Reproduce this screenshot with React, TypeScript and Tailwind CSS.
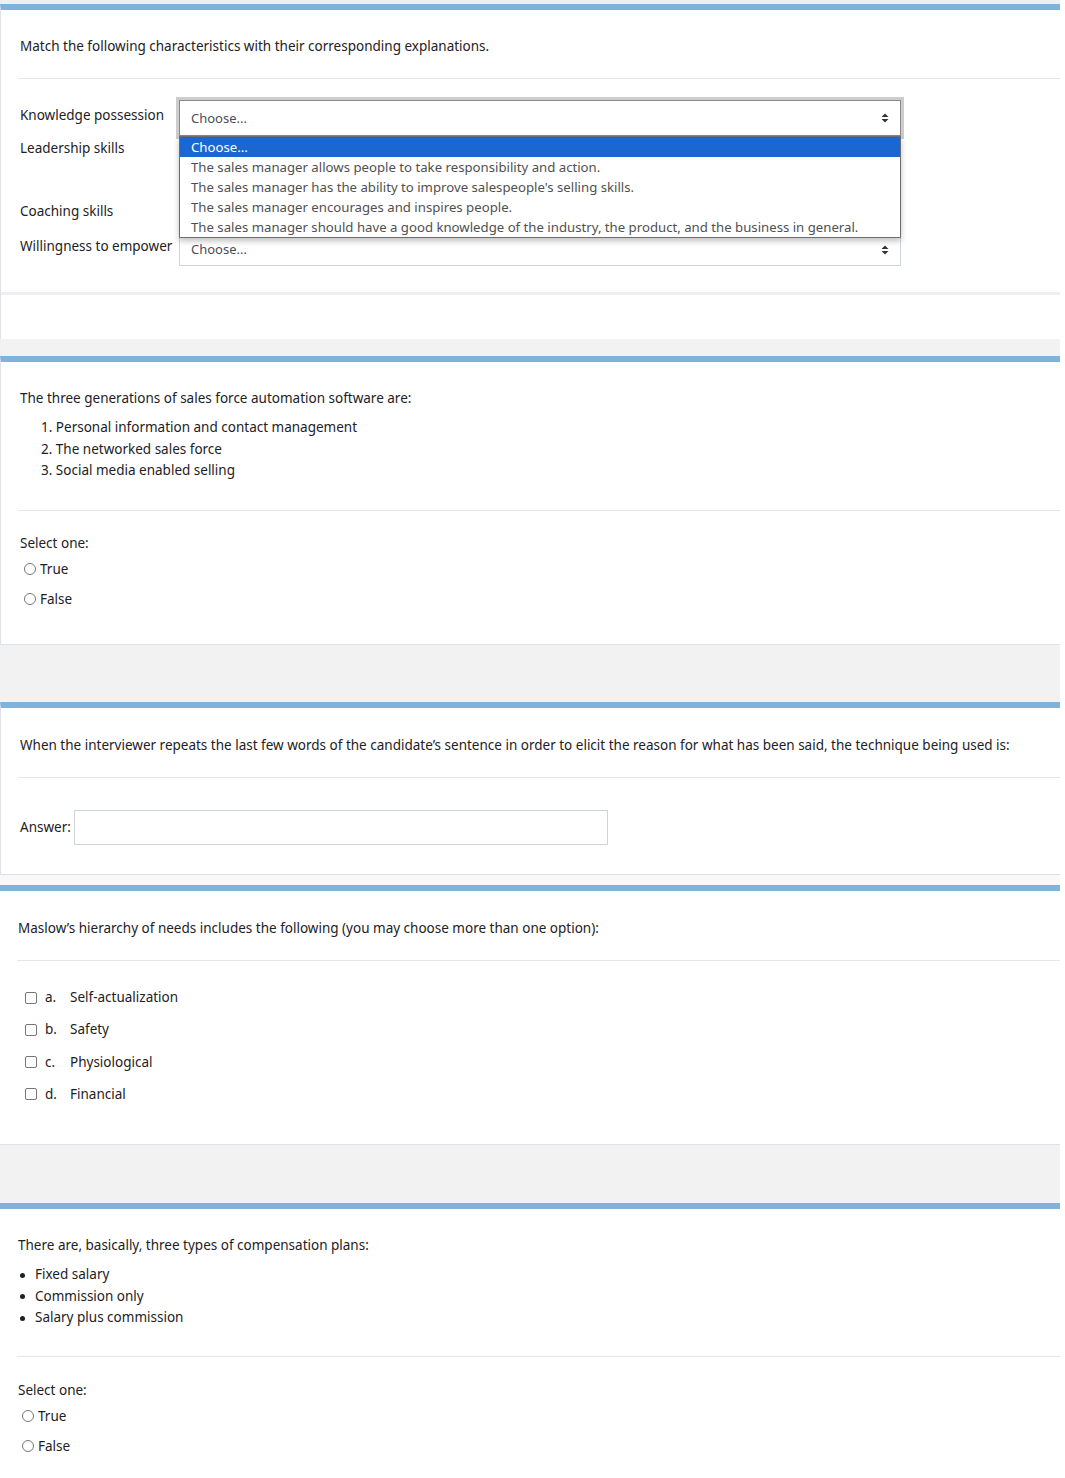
import React from 'react'

const font = { fontFamily: '"Noto Sans", "Open Sans", Arial, sans-serif' }

const options = [
  "The sales manager allows people to take responsibility and action.",
  "The sales manager has the ability to improve salespeople's selling skills.",
  "The sales manager encourages and inspires people.",
  "The sales manager should have a good knowledge of the industry, the product, and the business in general.",
]

const Arrows = () => (
  <svg width="8" height="11" viewBox="0 0 8 11" className="absolute right-[11px] top-1/2 -translate-y-1/2">
    <path d="M0.5 4.5 L4 1 L7.5 4.5 Z" fill="#333" />
    <path d="M0.5 6.5 L4 10 L7.5 6.5 Z" fill="#333" />
  </svg>
)

// covered = sits under the open dropdown, so its label is not drawn
const Select = ({ h = 33, focused = false, covered = false, children }: { h?: number; focused?: boolean; covered?: boolean; children?: React.ReactNode }) => (
  <div
    className={
      focused
        ? "relative w-[722px] h-[36px] bg-white border border-[#8a8a8a] shadow-[0_0_0_3px_#cdcdcd] flex items-center pl-[11px] text-[13px] text-[#495057]"
        : "relative w-[722px] bg-white border border-[#ced4da] flex items-center pl-[11px] text-[13px] text-[#495057]"
    }
    style={focused ? undefined : { height: h }}
  >
    {!covered && "Choose..."}
    <Arrows />
    {children}
  </div>
)

const Radio = () => <span className="inline-block w-[12px] h-[12px] rounded-full border border-[#767676] bg-white" />
const Check = () => <span className="inline-block w-[12px] h-[12px] rounded-[2px] border border-[#767676] bg-white" />

export default function App() {
  return (
    <div className="w-[1065px] min-h-screen bg-white text-[13.5px] leading-[21px] text-[#1d2125]" style={font}>
      <div className="w-[1060px]">
        <div className="h-[4px] bg-[#f0f0f0]" />

        {/* q1 matching */}
        <div className="border-t-[6px] border-[#7fb3d9] border-l border-l-[#dee2e6] bg-white">
          <div className="pl-[19px] pt-[26px] pb-[21px]">Match the following characteristics with their corresponding explanations.</div>
          <div className="ml-[17px] border-t border-[#e6e6e6]" />
          <div className="pl-[19px] pt-[21px] pb-[26px]">
            <div className="flex h-[36px]">
              <div className="w-[159px] pt-[5px]">Knowledge possession</div>
              <div className="relative z-10">
                <Select focused>
                  <div className="absolute left-[-1px] top-[35px] w-[722px] bg-white border border-[#6e6e6e] shadow-[0_3px_6px_rgba(0,0,0,0.25)] text-[13.2px] text-[#505050]">
                    <div className="h-[20px] bg-[#1a67d2] text-white pl-[11px] leading-[20px]">Choose...</div>
                    {options.map((o) => (
                      <div key={o} className="h-[20px] pl-[11px] leading-[20px]">{o}</div>
                    ))}
                  </div>
                </Select>
              </div>
            </div>
            <div className="flex h-[62px]">
              <div className="w-[159px] pt-[2px]">Leadership skills</div>
              <div className="pt-[14px]"><Select covered /></div>
            </div>
            <div className="flex h-[35px]">
              <div className="w-[159px] pt-[3px]">Coaching skills</div>
              <Select covered />
            </div>
            <div className="flex h-[33px]">
              <div className="w-[159px] pt-[3px]">Willingness to empower</div>
              <Select />
            </div>
          </div>
          <div className="border-t-[3px] border-[#efefef] h-[47px]" />
        </div>
        <div className="h-[17px] bg-[#f2f2f2]" />

        {/* q2 true/false */}
        <div className="border-t-[6px] border-[#7fb3d9] border-l border-l-[#dee2e6] border-b border-b-[#dee2e6] bg-white">
          <div className="pl-[19px] pt-[26px] pb-[28px]">
            <div>The three generations of sales force automation software are:</div>
            <ol className="mt-[8px] pl-[21px] leading-[21.5px]">
              <li>1. Personal information and contact management</li>
              <li>2. The networked sales force</li>
              <li>3. Social media enabled selling</li>
            </ol>
          </div>
          <div className="ml-[17px] border-t border-[#e6e6e6]" />
          <div className="pl-[19px] pt-[22px] pb-[34px]">
            <div>Select one:</div>
            <div className="mt-[5px] ml-[4px] flex items-center gap-[4px]"><Radio />True</div>
            <div className="mt-[9px] ml-[4px] flex items-center gap-[4px]"><Radio />False</div>
          </div>
        </div>
        <div className="h-[57px] bg-[#f2f2f2]" />

        {/* q3 short answer */}
        <div className="border-t-[6px] border-[#7fb3d9] border-l border-l-[#dee2e6] border-b border-b-[#dee2e6] bg-white">
          <div className="pl-[19px] pt-[27px] pb-[21px]">When the interviewer repeats the last few words of the candidate’s sentence in order to elicit the reason for what has been said, the technique being used is:</div>
          <div className="ml-[17px] border-t border-[#e6e6e6]" />
          <div className="pl-[19px] pt-[32px] pb-[29px] flex items-center gap-[3px]">
            <span>Answer:</span>
            <div className="w-[534px] h-[35px] border border-[#ced4da] bg-white" />
          </div>
        </div>
        <div className="h-[10px] bg-[#f8f8f8]" />

        {/* q4 multi choice */}
        <div className="border-t-[6px] border-[#7fb3d9] border-b border-b-[#dee2e6] bg-white">
          <div className="pl-[18px] pt-[27px] pb-[21px]">Maslow’s hierarchy of needs includes the following (you may choose more than one option):</div>
          <div className="ml-[17px] border-t border-[#e6e6e6]" />
          <div className="pl-[25px] pt-[27px] pb-[40px] flex flex-col gap-[12.3px]">
            {[["a.", "Self-actualization"], ["b.", "Safety"], ["c.", "Physiological"], ["d.", "Financial"]].map(([l, t]) => (
              <div key={l} className="flex items-center h-[20px]">
                <Check />
                <span className="w-[33px] pl-[8px]">{l}</span>
                <span>{t}</span>
              </div>
            ))}
          </div>
        </div>
        <div className="h-[58px] bg-[#f2f2f2]" />

        {/* q5 true/false */}
        <div className="border-t-[6px] border-[#7fb3d9] bg-white">
          <div className="pl-[18px] pt-[26px] pb-[27px]">
            <div>There are, basically, three types of compensation plans:</div>
            <ul className="mt-[8px] leading-[21.5px]">
              {["Fixed salary", "Commission only", "Salary plus commission"].map((t) => (
                <li key={t} className="flex items-center">
                  <span className="w-[17px] pl-[2px] flex items-center">
                    <span className="w-[5px] h-[5px] rounded-full bg-[#1d2125]" />
                  </span>
                  {t}
                </li>
              ))}
            </ul>
          </div>
          <div className="ml-[17px] border-t border-[#e6e6e6]" />
          <div className="pl-[18px] pt-[23px] pb-[20px]">
            <div>Select one:</div>
            <div className="mt-[5px] ml-[4px] flex items-center gap-[4px]"><Radio />True</div>
            <div className="mt-[9px] ml-[4px] flex items-center gap-[4px]"><Radio />False</div>
          </div>
        </div>
      </div>
    </div>
  )
}
